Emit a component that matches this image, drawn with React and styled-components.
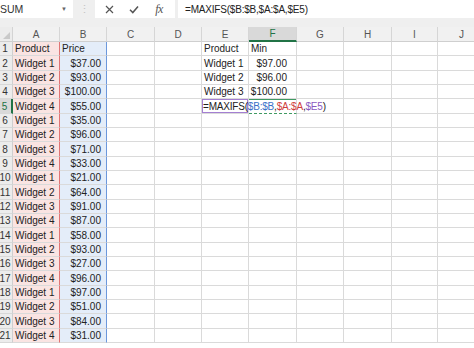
import React from 'react';
import styled, { createGlobalStyle } from 'styled-components';

const GlobalStyle = createGlobalStyle`
  html, body {
    margin: 0;
    padding: 0;
    background: #ffffff;
    overflow: hidden;
  }
  body {
    width: 474px;
    height: 348px;
    font-family: "Liberation Sans", Arial, sans-serif;
  }
`;

const Window = styled.div`
  width: 474px;
  height: 348px;
  overflow: hidden;
  background: #ffffff;
`;

const FormulaBar = styled.div`
  display: flex;
  align-items: flex-start;
  height: 27px;
  background: #efefef;
  box-sizing: border-box;
`;

const NameBox = styled.div`
  display: flex;
  align-items: center;
  justify-content: space-between;
  width: 73px;
  height: 18px;
  background: #ffffff;
  box-sizing: border-box;
  padding: 0 6px 0 0;
  font-size: 10.5px;
  color: #333;
`;

const Caret = styled.span`
  font-size: 6px;
  color: #666;
`;

const Grip = styled.div`
  width: 22px;
  height: 18px;
  display: flex;
  align-items: center;
  justify-content: center;
  color: #c4c4c4;
  font-size: 11px;
`;

const ButtonBox = styled.div`
  display: flex;
  align-items: center;
  width: 80px;
  height: 18px;
  background: #ffffff;
  padding-left: 8px;
  gap: 13px;
  box-sizing: border-box;
`;

const IconButton = styled.span`
  display: flex;
  align-items: center;
  justify-content: center;
  width: 12px;
  height: 18px;
`;

const Fx = styled.span`
  font-family: "Liberation Serif", serif;
  font-style: italic;
  font-size: 12px;
  color: #555;
  letter-spacing: -0.5px;
`;

const FormulaInput = styled.div`
  flex: 1;
  margin-left: 3px;
  height: 18px;
  background: #ffffff;
  display: flex;
  align-items: center;
  padding-left: 7px;
  font-size: 10px;
  letter-spacing: -0.2px;
  color: #222;
  white-space: nowrap;
`;

const Sheet = styled.div`
  display: grid;
  grid-template-columns: ${p => p.$cols};
  grid-template-rows: ${p => p.$rows};
  font-size: 10px;
  color: #222;
`;

const Corner = styled.div`
  position: relative;
  background: #ececec;
  border-right: 1px solid #d4d4d4;
  border-bottom: 1px solid #cfcfcf;
  box-sizing: border-box;
  &::after {
    content: '';
    position: absolute;
    right: 2px;
    bottom: 2px;
    width: 0;
    height: 0;
    border-left: 7px solid transparent;
    border-bottom: 7px solid #c9c9c9;
  }
`;

const ColHead = styled.div`
  display: flex;
  align-items: center;
  justify-content: center;
  background: ${p => (p.$on ? '#d9d9d9' : '#f1f1f1')};
  color: ${p => (p.$on ? '#217346' : '#555')};
  border-right: 1px solid #d6d6d6;
  border-bottom: ${p => (p.$on ? '2px solid #217346' : '1px solid #cfcfcf')};
  box-sizing: border-box;
  font-size: 10px;
`;

const RowHead = styled.div`
  display: flex;
  align-items: flex-end;
  justify-content: center;
  padding: 0 2px 1px 0;
  overflow: hidden;
  background: ${p => (p.$on ? '#d9d9d9' : '#ececec')};
  color: ${p => (p.$on ? '#217346' : '#333')};
  border-right: ${p => (p.$on ? '2px solid #217346' : '1px solid #cfcfcf')};
  border-bottom: 1px solid #d8d8d8;
  box-sizing: border-box;
  font-size: 10px;
  white-space: nowrap;
`;

const fills = {
  a: { bg: '#fae4e2', edge: '#e07474' },
  b: { bg: '#e4edf9', edge: '#6c98dc' },
};

const Cell = styled.div`
  position: relative;
  display: flex;
  align-items: flex-end;
  justify-content: ${p => (p.$right ? 'flex-end' : 'flex-start')};
  padding: 0 ${p => (p.$right ? p.$pad : 0)}px 1px ${p => (p.$right ? 0 : 2)}px;
  background: ${p => (fills[p.$fill] ? fills[p.$fill].bg : '#ffffff')};
  border-right: 1px solid ${p => (fills[p.$fill] ? fills[p.$fill].edge : '#dadada')};
  border-bottom: 1px solid #dadada;
  box-sizing: border-box;
  white-space: nowrap;
  ${p => p.$ref && 'box-shadow: inset 0 0 0 1px #a47fd2;'}
  ${p => p.$active && 'border-bottom: 1px dashed #3f9a62; box-shadow: inset 0 1px 0 #3f9a62;'}
`;

const EditText = styled.span`
  position: absolute;
  left: 1px;
  top: 0;
  bottom: 0;
  display: flex;
  align-items: center;
  z-index: 3;
  color: #222;
  font-size: 10px;
  letter-spacing: -0.2px;
  white-space: nowrap;
`;

const Ref = styled.span`
  color: ${p => p.$c};
`;

const colWidths = [47, 47, 48, 47, 47, 48, 47, 48, 46, 48];
const letters = ['A', 'B', 'C', 'D', 'E', 'F', 'G', 'H', 'I', 'J'];

const prices = [37, 93, 100, 55, 35, 96, 71, 33, 21, 64, 91, 87, 58, 93, 27, 96, 97, 51, 84, 31];

const summary = {
  1: ['Product', 'Min'],
  2: ['Widget 1', '$97.00'],
  3: ['Widget 2', '$96.00'],
  4: ['Widget 3', '$100.00'],
};

const rowHeights = Array.from({ length: 21 }, (_, i) => Math.round((i + 1) * 14.33) - Math.round(i * 14.33));

const XIcon = () => (
  <svg width="9" height="9" viewBox="0 0 9 9">
    <path d="M1 1 L8 8 M8 1 L1 8" stroke="#555" strokeWidth="1.2" fill="none" />
  </svg>
);

const CheckIcon = () => (
  <svg width="10" height="9" viewBox="0 0 10 9">
    <path d="M1 4.8 L3.8 7.6 L9 1.4" stroke="#555" strokeWidth="1.5" fill="none" />
  </svg>
);

const Formula = () => (
  <>
    =MAXIFS(<Ref $c="#3a6fc8">$B:$B</Ref>,<Ref $c="#cf3c3c">$A:$A</Ref>,<Ref $c="#8a58c0">$E5</Ref>)
  </>
);

const renderRow = r => {
  const cells = [];
  letters.forEach(l => {
    const key = `${l}${r}`;
    if (l === 'A') {
      cells.push(
        <Cell key={key} $fill="a">{r === 1 ? 'Product' : `Widget ${((r - 2) % 4) + 1}`}</Cell>
      );
    } else if (l === 'B') {
      cells.push(
        r === 1 ? (
          <Cell key={key} $fill="b">Price</Cell>
        ) : (
          <Cell key={key} $fill="b" $right $pad={5}>{`$${prices[r - 2]}.00`}</Cell>
        )
      );
    } else if (l === 'E') {
      if (r === 5) {
        cells.push(
          <Cell key={key} $ref>
            <EditText><Formula /></EditText>
          </Cell>
        );
      } else {
        cells.push(<Cell key={key}>{summary[r] ? summary[r][0] : ''}</Cell>);
      }
    } else if (l === 'F') {
      const v = summary[r] ? summary[r][1] : '';
      if (r === 5) cells.push(<Cell key={key} $active />);
      else if (r === 1) cells.push(<Cell key={key}>{v}</Cell>);
      else cells.push(<Cell key={key} $right={!!v} $pad={9}>{v}</Cell>);
    } else {
      cells.push(<Cell key={key} />);
    }
  });
  return cells;
};

export default function App() {
  const cols = `13px ${colWidths.map(w => `${w}px`).join(' ')}`;
  const rows = `15px ${rowHeights.map(h => `${h}px`).join(' ')}`;

  return (
    <Window>
      <GlobalStyle />
      <FormulaBar>
        <NameBox>
          <span>SUM</span>
          <Caret>▼</Caret>
        </NameBox>
        <Grip>⋮</Grip>
        <ButtonBox>
          <IconButton><XIcon /></IconButton>
          <IconButton><CheckIcon /></IconButton>
          <IconButton><Fx>fx</Fx></IconButton>
        </ButtonBox>
        <FormulaInput>=MAXIFS($B:$B,$A:$A,$E5)</FormulaInput>
      </FormulaBar>
      <Sheet $cols={cols} $rows={rows}>
        <Corner />
        {letters.map(l => (
          <ColHead key={l} $on={l === 'F'}>{l}</ColHead>
        ))}
        {rowHeights.map((_, i) => {
          const r = i + 1;
          return (
            <React.Fragment key={r}>
              <RowHead $on={r === 5}>{r}</RowHead>
              {renderRow(r)}
            </React.Fragment>
          );
        })}
      </Sheet>
    </Window>
  );
}
